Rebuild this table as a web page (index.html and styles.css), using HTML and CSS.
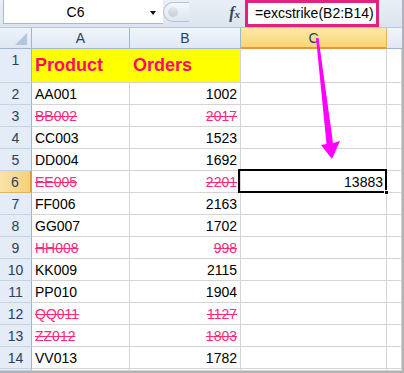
FILE: index.html
```html
<!DOCTYPE html>
<html lang="en">
<head>
    <meta charset="UTF-8">
    <title>excstrike</title>
    <link rel="stylesheet" href="styles.css">
</head>
<body>
    <div class="window">
        <div class="fbar">
            <div class="namebox"><span class="ref">C6</span><span class="drop"></span></div>
            <div class="knob"><span class="dot"></span></div>
            <div class="fx">f<span class="sx">x</span></div>
            <div class="formula">=excstrike(B2:B14)</div>
        </div>

        <div class="grid">
            <div class="corner"><span class="tri"></span></div>
            <div class="colh">A</div>
            <div class="colh">B</div>
            <div class="colh on">C</div>
            <div class="colh last"></div>

            <div class="rowh">1</div>
            <div class="cell title yellow nob">Product</div>
            <div class="cell title yellow">Orders</div>
            <div class="cell"></div>
            <div class="cell"></div>

            <div class="rowh">2</div>
            <div class="cell">AA001</div>
            <div class="cell num">1002</div>
            <div class="cell"></div>
            <div class="cell"></div>

            <div class="rowh">3</div>
            <div class="cell strike">BB002</div>
            <div class="cell num strike">2017</div>
            <div class="cell"></div>
            <div class="cell"></div>

            <div class="rowh">4</div>
            <div class="cell">CC003</div>
            <div class="cell num">1523</div>
            <div class="cell"></div>
            <div class="cell"></div>

            <div class="rowh">5</div>
            <div class="cell">DD004</div>
            <div class="cell num">1692</div>
            <div class="cell"></div>
            <div class="cell"></div>

            <div class="rowh on">6</div>
            <div class="cell strike">EE005</div>
            <div class="cell num strike">2201</div>
            <div class="cell num sel">13883<span class="handle"></span></div>
            <div class="cell"></div>

            <div class="rowh">7</div>
            <div class="cell">FF006</div>
            <div class="cell num">2163</div>
            <div class="cell"></div>
            <div class="cell"></div>

            <div class="rowh">8</div>
            <div class="cell">GG007</div>
            <div class="cell num">1702</div>
            <div class="cell"></div>
            <div class="cell"></div>

            <div class="rowh">9</div>
            <div class="cell strike">HH008</div>
            <div class="cell num strike">998</div>
            <div class="cell"></div>
            <div class="cell"></div>

            <div class="rowh">10</div>
            <div class="cell">KK009</div>
            <div class="cell num">2115</div>
            <div class="cell"></div>
            <div class="cell"></div>

            <div class="rowh">11</div>
            <div class="cell">PP010</div>
            <div class="cell num">1904</div>
            <div class="cell"></div>
            <div class="cell"></div>

            <div class="rowh">12</div>
            <div class="cell strike">QQ011</div>
            <div class="cell num strike">1127</div>
            <div class="cell"></div>
            <div class="cell"></div>

            <div class="rowh">13</div>
            <div class="cell strike">ZZ012</div>
            <div class="cell num strike">1803</div>
            <div class="cell"></div>
            <div class="cell"></div>

            <div class="rowh">14</div>
            <div class="cell">VV013</div>
            <div class="cell num">1782</div>
            <div class="cell"></div>
            <div class="cell"></div>

            <div class="rowh"></div>
            <div class="cell"></div>
            <div class="cell"></div>
            <div class="cell"></div>
            <div class="cell"></div>
        </div>

        <!-- arrow from the formula down to the result cell -->
        <svg class="arrow" width="404" height="373" viewBox="0 0 404 373">
            <polygon points="316,38 318.5,38 333,143 340,141 332,159 321,145 326.5,144" fill="#ff00ff"/>
        </svg>
    </div>
</body>
</html>
```

FILE: styles.css
```css
body{
    margin: 0;
    background-color: #b3b3b3;
    font-family: "Liberation Sans", Arial, sans-serif;
}
.window{
    position: relative;
    width: 402px;
    height: 371px;
    overflow: hidden;
    background-color: #ffffff;
}

/* formula bar */
.fbar{
    display: flex;
    height: 28px;
    background: linear-gradient(#e9eff7, #dbe4ef);
    border-bottom: 1px solid #b7c6d8;
    box-sizing: border-box;
}
.namebox{
    position: relative;
    margin-left: 3px;
    width: 160px;
    height: 24px;
    background-color: #ffffff;
    border-left: 1px solid #a9b8cb;
    border-bottom: 1px solid #a9b8cb;
    box-sizing: border-box;
    font-size: 14px;
    line-height: 24px;
    text-align: center;
}
.ref{
    margin-left: -16px;
}
.drop{
    position: absolute;
    left: 146px;
    top: 11px;
    border-left: 3px solid transparent;
    border-right: 3px solid transparent;
    border-top: 4px solid #111;
}
.knob{
    margin-top: 2px;
    width: 26px;
    height: 20px;
    border: 1px solid #b5c3d4;
    border-right: 0;
    border-radius: 11px 0 0 11px;
    background: linear-gradient(#f4f7fb, #dfe6ef);
    box-sizing: border-box;
    position: relative;
}
.dot{
    position: absolute;
    left: 4px;
    top: 4px;
    width: 10px;
    height: 10px;
    border-radius: 50%;
    background: linear-gradient(#e3e7ec, #c8ced6);
}
.fx{
    width: 56px;
    text-align: right;
    padding-right: 5px;
    box-sizing: border-box;
    font-family: "Liberation Serif", serif;
    font-style: italic;
    font-weight: bold;
    font-size: 16px;
    line-height: 26px;
    color: #3b4454;
}
.sx{
    font-size: 11px;
}
.formula{
    width: 134px;
    height: 27px;
    border: 3px solid #e5207d;
    background-color: #ffffff;
    box-sizing: border-box;
    padding-left: 7px;
    font-size: 14px;
    line-height: 21px;
    color: #000;
    white-space: nowrap;
}

/* sheet */
.grid{
    display: grid;
    grid-template-columns: 32px 98px 111px 146px 1fr;
    grid-template-rows: 21px 34px repeat(13, 22px) 1fr;
    height: 343px;
}
.grid > div{
    box-sizing: border-box;
}
.corner{
    position: relative;
    background: linear-gradient(#eef3fa, #dde6f2);
    border-right: 1px solid #9eb6ce;
    border-bottom: 1px solid #9eb6ce;
}
.tri{
    position: absolute;
    right: 4px;
    bottom: 3px;
    border-left: 12px solid transparent;
    border-bottom: 12px solid #b6c6d9;
}
.colh{
    background: linear-gradient(#f1f5fb, #dfe8f4);
    border-right: 1px solid #9eb6ce;
    border-bottom: 1px solid #9eb6ce;
    text-align: center;
    font-size: 14px;
    line-height: 21px;
    color: #27415f;
}
.colh.on{
    background: linear-gradient(#fde9a8, #f9d574);
    border-bottom: 2px solid #e59a35;
    border-right: 1px solid #e0b45c;
}
.colh.last{
    border-right: 0;
}
.rowh{
    background-color: #e4ecf7;
    border-right: 1px solid #9eb6ce;
    border-bottom: 1px solid #c5d3e3;
    text-align: center;
    font-size: 14px;
    line-height: 22px;
    color: #27415f;
}
.rowh.on{
    background: linear-gradient(90deg, #fbe3a8, #f7cf78);
    border-right: 2px solid #e59a35;
    border-bottom: 1px solid #e0b45c;
}
.cell{
    border-right: 1px solid #d4d4d4;
    border-bottom: 1px solid #d4d4d4;
    padding: 0 3px;
    font-size: 14px;
    line-height: 22px;
    color: #000;
    white-space: nowrap;
}
.num{
    text-align: right;
}
.strike{
    color: #ff2a79;
    text-decoration: line-through;
}
.yellow{
    background-color: #ffff00;
}
.nob{
    border-right-color: #ffff00;
}
.title{
    font-size: 18px;
    font-weight: bold;
    line-height: 33px;
    color: #ff0a6c;
}
.sel{
    position: relative;
}
.sel::after{
    content: "";
    position: absolute;
    left: -3px;
    top: -2px;
    right: -1px;
    bottom: -1px;
    border: 2px solid #000;
}
.handle{
    position: absolute;
    right: -3px;
    bottom: -3px;
    width: 5px;
    height: 5px;
    background-color: #000;
    border: 1px solid #fff;
    box-sizing: border-box;
    z-index: 1;
}
.arrow{
    position: absolute;
    left: 0;
    top: 0;
    pointer-events: none;
}
```
